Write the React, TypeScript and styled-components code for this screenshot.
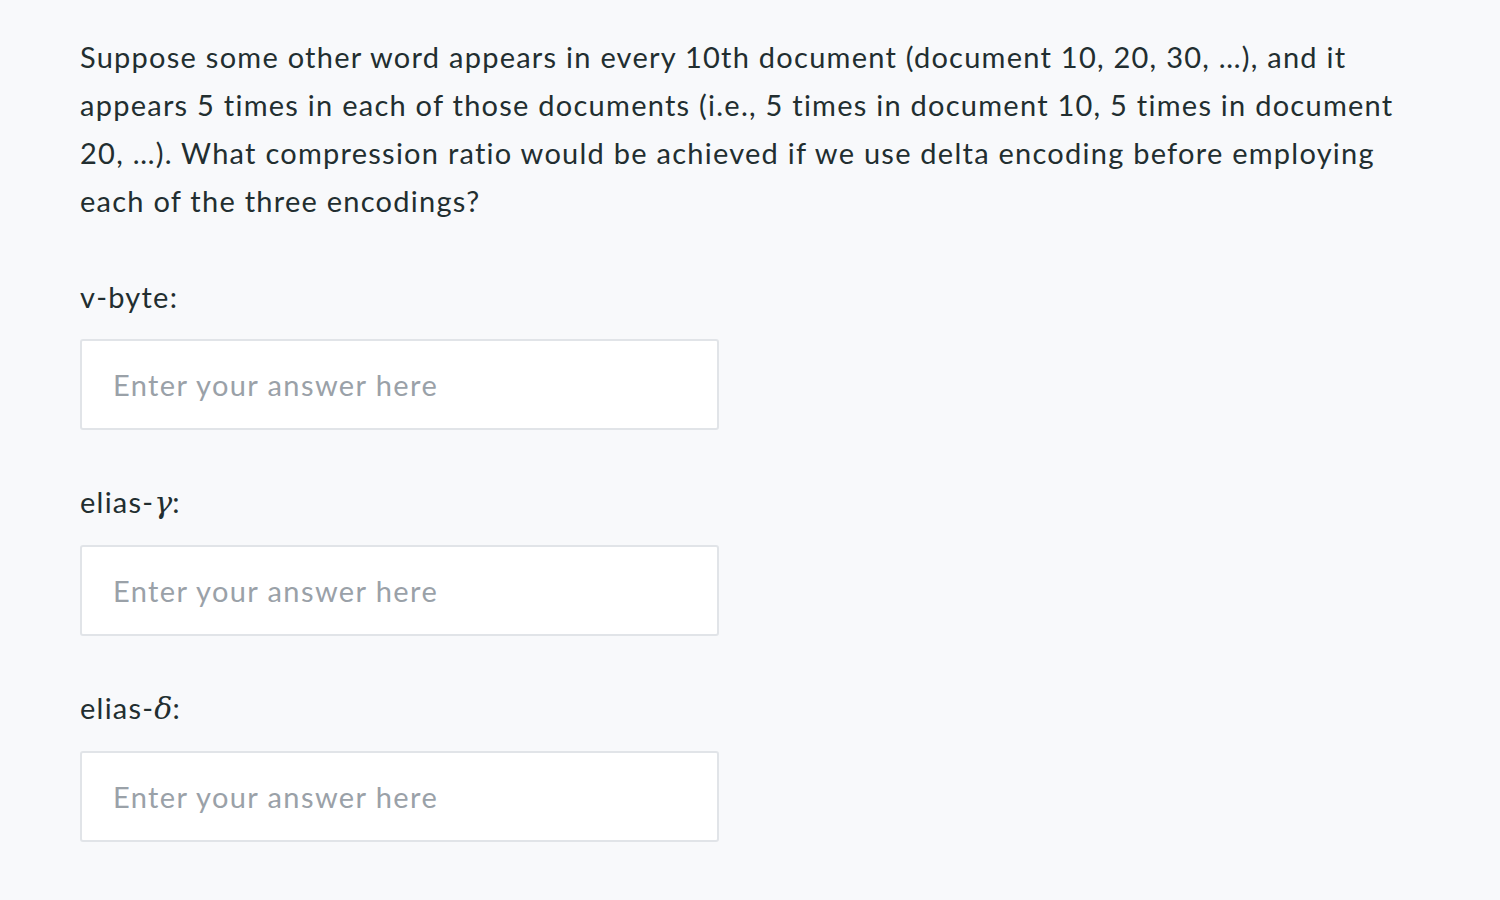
import React from 'react';
import styled, { createGlobalStyle } from 'styled-components';

const GlobalStyle = createGlobalStyle`
  html, body {
    margin: 0;
    padding: 0;
    background: #f8f9fb;
  }
  body {
    font-family: Lato, 'Open Sans', 'Liberation Sans', sans-serif;
    color: #222e30;
  }
`;

const Page = styled.main`
  padding: 33px 80px 40px 80px;
  width: 1340px;
`;

const Question = styled.p`
  margin: 0 0 48px 0;
  font-size: 29px;
  line-height: 48px;
  letter-spacing: 1.25px;
`;

const Field = styled.div`
  display: flex;
  flex-direction: column;
  gap: 18px;
  margin-bottom: 48px;
`;

const Label = styled.label`
  font-size: 29px;
  line-height: 48px;
  letter-spacing: 1.25px;
`;

const MathSym = styled.span`
  font-family: 'DejaVu Serif', 'Liberation Serif', serif;
  font-style: italic;
  font-size: 30px;
  letter-spacing: 0;
`;

const AnswerInput = styled.input`
  box-sizing: border-box;
  width: 639px;
  height: 91px;
  padding: 0 31px;
  background: #ffffff;
  border: 2px solid #e1e4e8;
  border-radius: 3px;
  font-family: inherit;
  font-size: 29px;
  letter-spacing: 1.4px;
  color: #222e30;
  outline: none;

  &::placeholder {
    color: #9aa1a8;
  }
`;

const fields: { id: string; name: string; sym?: string }[] = [
  { id: 'vbyte', name: 'v-byte' },
  { id: 'gamma', name: 'elias-', sym: 'γ' },
  { id: 'delta', name: 'elias-', sym: 'δ' },
];

const App: React.FC = () => (
  <>
    <GlobalStyle />
    <Page>
      <Question>
        Suppose some other word appears in every 10th document (document 10, 20, 30, …), and it
        appears 5 times in each of those documents (i.e., 5 times in document 10, 5 times in document
        20, …). What compression ratio would be achieved if we use delta encoding before employing
        each of the three encodings?
      </Question>
      {fields.map((f) => (
        <Field key={f.id}>
          <Label htmlFor={f.id}>
            {f.name}
            {f.sym && <MathSym>{f.sym}</MathSym>}:
          </Label>
          <AnswerInput id={f.id} type="text" placeholder="Enter your answer here" />
        </Field>
      ))}
    </Page>
  </>
);

export default App;
